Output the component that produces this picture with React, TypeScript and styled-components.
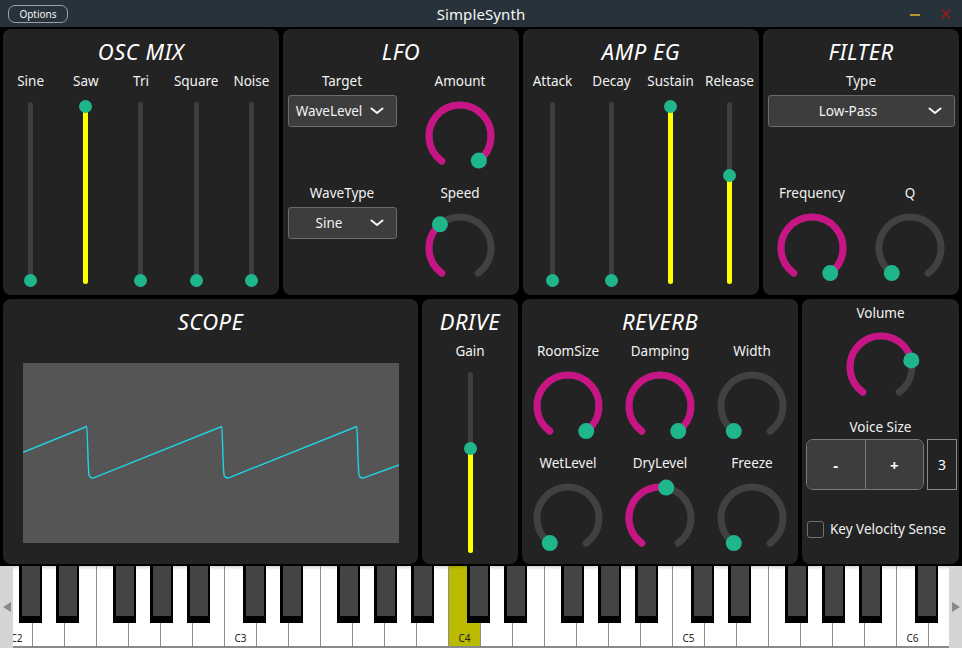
import React from 'react';
import styled, { createGlobalStyle } from 'styled-components';

const GlobalStyle = createGlobalStyle`
  html, body {
    margin: 0;
    padding: 0;
    background: #000;
  }
  body {
    font-family: "Noto Sans", "DejaVu Sans", sans-serif;
    color: #f2f2f2;
  }
`;

const StyledWindow = styled.div`
  width: 962px;
  height: 648px;
  background: #000;
  display: flex;
  flex-direction: column;
  overflow: hidden;
`;

const StyledTitleBar = styled.header`
  height: 27px;
  flex: none;
  background: #27323a;
  display: grid;
  grid-template-columns: 1fr auto 1fr;
  align-items: center;
`;

const StyledOptionsButton = styled.button`
  justify-self: start;
  margin-left: 8px;
  width: 60px;
  height: 18px;
  padding: 0;
  border: 1px solid #9aa1a6;
  border-radius: 7px;
  background: transparent;
  color: #f4f4f4;
  font-family: "Noto Sans", sans-serif;
  font-size: 10px;
  line-height: 16px;
`;

const StyledWindowTitle = styled.div`
  font-size: 15px;
  color: #f6f6f6;
  letter-spacing: 0.1px;
`;

const StyledWindowControls = styled.div`
  justify-self: end;
  display: flex;
  align-items: center;
  gap: 19px;
  padding-right: 10px;
`;

const StyledMain = styled.main`
  padding: 2px 3px 0;
  display: flex;
  flex-direction: column;
  gap: 4px;
`;

const StyledRow = styled.div<{ $h: number }>`
  height: ${(p) => p.$h}px;
  display: flex;
  gap: 4px;
`;

const StyledPanel = styled.section<{ $w?: number; $pt?: number }>`
  ${(p) => (p.$w ? `width: ${p.$w}px; flex: none;` : 'flex: 1;')}
  box-sizing: border-box;
  background: #232323;
  border-radius: 8px;
  padding-top: ${(p) => p.$pt ?? 7}px;
  display: flex;
  flex-direction: column;
`;

const StyledPanelTitle = styled.h2`
  margin: 0;
  height: 30px;
  line-height: 30px;
  text-align: center;
  font-style: italic;
  font-weight: 400;
  font-size: 22px;
  color: #fff;
  letter-spacing: 0.5px;
`;

const StyledColumns = styled.div<{ $n: number }>`
  display: grid;
  grid-template-columns: repeat(${(p) => p.$n}, 1fr);
  grid-auto-rows: 112px;
  margin-top: 6px;
`;

const StyledCell = styled.div<{ $span?: number }>`
  grid-column: span ${(p) => p.$span ?? 1};
  display: flex;
  flex-direction: column;
  align-items: center;
`;

const StyledLabel = styled.div`
  font-size: 13.5px;
  line-height: 19px;
  color: #f2f2f2;
  white-space: nowrap;
`;

const StyledSliderCol = styled.div`
  display: flex;
  flex-direction: column;
  align-items: center;
`;

const StyledTrack = styled.div<{ $h: number }>`
  position: relative;
  width: 5px;
  height: ${(p) => p.$h}px;
  margin-top: 11px;
  background: #3e3e3e;
  border-radius: 3px;
`;

const StyledFill = styled.div`
  position: absolute;
  left: 0;
  right: 0;
  bottom: 0;
  background: #ffff00;
  border-radius: 3px;
`;

const StyledThumb = styled.div`
  position: absolute;
  left: 50%;
  width: 13px;
  height: 13px;
  margin: -6.5px 0 0 -6.5px;
  border-radius: 50%;
  background: #20b68c;
`;

const StyledKnobSvg = styled.svg<{ $mt?: number }>`
  display: block;
  margin-top: ${(p) => p.$mt ?? 7}px;
  overflow: visible;
`;

const StyledCombo = styled.div<{ $w: number }>`
  width: ${(p) => p.$w}px;
  height: 32px;
  box-sizing: border-box;
  margin-top: 4px;
  background: #3d3d3d;
  border: 1px solid #6c6c6c;
  border-radius: 3px;
  display: flex;
  align-items: center;
`;

const StyledComboText = styled.span`
  flex: 1;
  text-align: center;
  font-size: 13.5px;
  color: #f2f2f2;
  white-space: nowrap;
`;

const StyledChevron = styled.svg`
  flex: none;
  margin-right: 12px;
`;

const StyledScopeScreen = styled.div`
  margin: 27px 19px 0 20px;
  height: 180px;
  background: #555555;
`;

const StyledVolumeBody = styled.div`
  display: flex;
  flex-direction: column;
  align-items: center;
`;

const StyledVoiceLabel = styled(StyledLabel)`
  margin-top: 13px;
`;

const StyledVoiceRow = styled.div`
  align-self: stretch;
  margin: 2px 2px 0 4px;
  display: flex;
  gap: 3px;
`;

const StyledStepGroup = styled.div`
  flex: 1;
  height: 51px;
  box-sizing: border-box;
  display: flex;
  border: 1px solid #7a7a7a;
  border-radius: 7px;
  overflow: hidden;
`;

const StyledStepButton = styled.button`
  flex: 1;
  border: none;
  background: #3d3d3d;
  color: #fff;
  font-family: "Noto Sans", sans-serif;
  font-size: 15px;
  font-weight: 700;
  padding: 0;
  & + & {
    border-left: 1px solid #7a7a7a;
  }
`;

const StyledNumberBox = styled.div`
  width: 30px;
  height: 51px;
  box-sizing: border-box;
  border: 1px solid #8a8a8a;
  display: flex;
  align-items: center;
  justify-content: center;
  font-size: 14px;
  color: #fff;
`;

const StyledCheckRow = styled.label`
  align-self: stretch;
  margin-top: 30px;
  padding-left: 5px;
  display: flex;
  align-items: center;
  gap: 6px;
  font-size: 13.5px;
  color: #f2f2f2;
`;

const StyledCheckBox = styled.span`
  width: 17px;
  height: 17px;
  box-sizing: border-box;
  border: 1px solid #707070;
  border-radius: 3px;
`;

const StyledKeyboard = styled.div`
  position: relative;
  margin-top: 2px;
  height: 82px;
  flex: none;
  background: #fff;
  overflow: hidden;
`;

const StyledWhiteRow = styled.div`
  display: flex;
  padding-left: 1px;
  height: 80px;
  border-bottom: 2px solid #8a8a8a;
`;

const StyledWhiteKey = styled.div<{ $active?: boolean }>`
  flex: none;
  width: 32px;
  box-sizing: border-box;
  border-right: 1px solid #8e8e8e;
  background: ${(p) =>
    p.$active
      ? 'linear-gradient(#a5a500, #baba00 4px)'
      : 'linear-gradient(#d8d8d8, #ffffff 4px)'};
  display: flex;
  align-items: flex-end;
  justify-content: center;
  padding-bottom: 2px;
  font-size: 10px;
  line-height: 12px;
  color: #222;
`;

const StyledBlackKey = styled.div`
  position: absolute;
  top: 0;
  width: 23px;
  height: 57px;
  box-sizing: border-box;
  background: #444444;
  border-left: 3px solid #000;
  border-right: 2px solid #000;
  border-bottom: 7px solid #000;
`;

const StyledScrollButton = styled.div<{ $side: 'left' | 'right' }>`
  position: absolute;
  top: 0;
  bottom: 0;
  ${(p) => p.$side}: 0;
  width: 13px;
  background: #d5d5d5;
  display: flex;
  align-items: center;
  justify-content: center;
`;

/* ---------- controls ---------- */

function Slider({ value, height = 182 }: { value: number; height?: number }) {
  const top = 4 + (1 - value) * (height - 8);
  return (
    <StyledTrack $h={height}>
      {value > 0.01 && <StyledFill style={{ height: height - top }} />}
      <StyledThumb style={{ top }} />
    </StyledTrack>
  );
}

const START = -144;
const SPAN = 288;

function point(cx: number, cy: number, r: number, deg: number) {
  const a = (deg * Math.PI) / 180;
  return [cx + r * Math.sin(a), cy - r * Math.cos(a)];
}

function arc(cx: number, cy: number, r: number, a0: number, a1: number) {
  const [x0, y0] = point(cx, cy, r, a0);
  const [x1, y1] = point(cx, cy, r, a1);
  const large = a1 - a0 > 180 ? 1 : 0;
  return `M${x0.toFixed(2)} ${y0.toFixed(2)} A${r} ${r} 0 ${large} 1 ${x1.toFixed(2)} ${y1.toFixed(2)}`;
}

function Knob({ value, mt }: { value: number; mt?: number }) {
  const c = 38;
  const r = 31;
  const a = START + value * SPAN;
  const [tx, ty] = point(c, c, r, a);
  return (
    <StyledKnobSvg $mt={mt} width="76" height="76" viewBox="0 0 76 76">
      <path d={arc(c, c, r, START, START + SPAN)} fill="none" stroke="#414141" strokeWidth="7" strokeLinecap="round" />
      {value > 0.01 && (
        <path d={arc(c, c, r, START, a)} fill="none" stroke="#c71585" strokeWidth="7" strokeLinecap="round" />
      )}
      <circle cx={tx} cy={ty} r="8" fill="#20b68c" />
    </StyledKnobSvg>
  );
}

function Combo({ text, width }: { text: string; width: number }) {
  return (
    <StyledCombo $w={width}>
      <StyledComboText>{text}</StyledComboText>
      <StyledChevron width="14" height="8" viewBox="0 0 14 8">
        <path d="M1.5 1.5 L7 6 L12.5 1.5" fill="none" stroke="#f2f2f2" strokeWidth="2" strokeLinecap="round" strokeLinejoin="round" />
      </StyledChevron>
    </StyledCombo>
  );
}

function KnobCell({ label, value }: { label: string; value: number }) {
  return (
    <StyledCell>
      <StyledLabel>{label}</StyledLabel>
      <Knob value={value} />
    </StyledCell>
  );
}

function sawPath() {
  const peaks = [63.7, 198.7, 333.7];
  let d = 'M0 89.3 L63.7 63.5';
  peaks.forEach((p, i) => {
    const next = peaks[i + 1];
    d += ` C${p + 0.8} 63.5 ${p + 1.1} 107 ${p + 2.4} 112.2 Q${p + 3.8} 115.6 ${p + 7} 114.8`;
    d += next ? ` L${next} 63.5` : ' L376 102';
  });
  return d;
}

/* ---------- panels ---------- */

function OscMix() {
  const sliders: [string, number][] = [
    ['Sine', 0],
    ['Saw', 1],
    ['Tri', 0],
    ['Square', 0],
    ['Noise', 0],
  ];
  return (
    <StyledPanel $w={276}>
      <StyledPanelTitle>OSC MIX</StyledPanelTitle>
      <StyledColumns $n={5} style={{ gridAutoRows: 'auto' }}>
        {sliders.map(([name, v]) => (
          <StyledSliderCol key={name}>
            <StyledLabel>{name}</StyledLabel>
            <Slider value={v} />
          </StyledSliderCol>
        ))}
      </StyledColumns>
    </StyledPanel>
  );
}

function Lfo() {
  return (
    <StyledPanel $w={236}>
      <StyledPanelTitle>LFO</StyledPanelTitle>
      <StyledColumns $n={2}>
        <StyledCell>
          <StyledLabel>Target</StyledLabel>
          <Combo text="WaveLevel" width={109} />
        </StyledCell>
        <KnobCell label="Amount" value={0.995} />
        <StyledCell>
          <StyledLabel>WaveType</StyledLabel>
          <Combo text="Sine" width={109} />
        </StyledCell>
        <KnobCell label="Speed" value={0.36} />
      </StyledColumns>
    </StyledPanel>
  );
}

function AmpEg() {
  const sliders: [string, number][] = [
    ['Attack', 0],
    ['Decay', 0],
    ['Sustain', 1],
    ['Release', 0.6],
  ];
  return (
    <StyledPanel $w={236}>
      <StyledPanelTitle>AMP EG</StyledPanelTitle>
      <StyledColumns $n={4} style={{ gridAutoRows: 'auto' }}>
        {sliders.map(([name, v]) => (
          <StyledSliderCol key={name}>
            <StyledLabel>{name}</StyledLabel>
            <Slider value={v} />
          </StyledSliderCol>
        ))}
      </StyledColumns>
    </StyledPanel>
  );
}

function Filter() {
  return (
    <StyledPanel>
      <StyledPanelTitle>FILTER</StyledPanelTitle>
      <StyledColumns $n={2}>
        <StyledCell $span={2}>
          <StyledLabel>Type</StyledLabel>
          <Combo text="Low-Pass" width={187} />
        </StyledCell>
        <KnobCell label="Frequency" value={1} />
        <KnobCell label="Q" value={0} />
      </StyledColumns>
    </StyledPanel>
  );
}

function Scope() {
  return (
    <StyledPanel $w={415}>
      <StyledPanelTitle>SCOPE</StyledPanelTitle>
      <StyledScopeScreen>
        <svg width="376" height="180" viewBox="0 0 376 180">
          <path d={sawPath()} fill="none" stroke="#1fd4e2" strokeWidth="1.4" />
        </svg>
      </StyledScopeScreen>
    </StyledPanel>
  );
}

function Drive() {
  return (
    <StyledPanel $w={96}>
      <StyledPanelTitle>DRIVE</StyledPanelTitle>
      <StyledColumns $n={1} style={{ gridAutoRows: 'auto' }}>
        <StyledSliderCol>
          <StyledLabel>Gain</StyledLabel>
          <Slider value={0.58} height={181} />
        </StyledSliderCol>
      </StyledColumns>
    </StyledPanel>
  );
}

function Reverb() {
  return (
    <StyledPanel $w={276}>
      <StyledPanelTitle>REVERB</StyledPanelTitle>
      <StyledColumns $n={3}>
        <KnobCell label="RoomSize" value={1} />
        <KnobCell label="Damping" value={1} />
        <KnobCell label="Width" value={0} />
        <KnobCell label="WetLevel" value={0} />
        <KnobCell label="DryLevel" value={0.54} />
        <KnobCell label="Freeze" value={0} />
      </StyledColumns>
    </StyledPanel>
  );
}

function Master() {
  return (
    <StyledPanel $pt={5}>
      <StyledVolumeBody>
        <StyledLabel>Volume</StyledLabel>
        <Knob value={0.77} mt={6} />
        <StyledVoiceLabel>Voice Size</StyledVoiceLabel>
        <StyledVoiceRow>
          <StyledStepGroup>
            <StyledStepButton>-</StyledStepButton>
            <StyledStepButton>+</StyledStepButton>
          </StyledStepGroup>
          <StyledNumberBox>3</StyledNumberBox>
        </StyledVoiceRow>
        <StyledCheckRow>
          <StyledCheckBox />
          Key Velocity Sense
        </StyledCheckRow>
      </StyledVolumeBody>
    </StyledPanel>
  );
}

function Keyboard() {
  const whites = Array.from({ length: 30 }, (_, i) => ({
    i,
    label: i % 7 === 0 ? `C${2 + i / 7}` : '',
  }));
  const blackOffsets = [18, 55, 112, 149, 186];
  const blacks: number[] = [];
  for (let o = 0; o < 5; o++) {
    blackOffsets.forEach((off) => {
      const left = 1 + o * 224 + off;
      if (left < 962) blacks.push(left);
    });
  }
  return (
    <StyledKeyboard>
      <StyledWhiteRow>
        {whites.map((k) => (
          <StyledWhiteKey key={k.i} $active={k.i === 14}>
            {k.label}
          </StyledWhiteKey>
        ))}
      </StyledWhiteRow>
      {blacks.map((left) => (
        <StyledBlackKey key={left} style={{ left }} />
      ))}
      <StyledScrollButton $side="left">
        <svg width="8" height="10" viewBox="0 0 8 10">
          <path d="M0 5 L8 0 L8 10 Z" fill="#8a8a8a" />
        </svg>
      </StyledScrollButton>
      <StyledScrollButton $side="right">
        <svg width="8" height="10" viewBox="0 0 8 10">
          <path d="M8 5 L0 0 L0 10 Z" fill="#8a8a8a" />
        </svg>
      </StyledScrollButton>
    </StyledKeyboard>
  );
}

export default function App() {
  return (
    <>
      <GlobalStyle />
      <StyledWindow>
        <StyledTitleBar>
          <StyledOptionsButton>Options</StyledOptionsButton>
          <StyledWindowTitle>SimpleSynth</StyledWindowTitle>
          <StyledWindowControls>
            <svg width="12" height="12" viewBox="0 0 12 12">
              <rect x="1" y="6" width="10" height="2" fill="#b3962b" />
            </svg>
            <svg width="12" height="12" viewBox="0 0 12 12">
              <path d="M2 1.5 L10 10.5 M10 1.5 L2 10.5" stroke="#a3171a" strokeWidth="1.4" />
            </svg>
          </StyledWindowControls>
        </StyledTitleBar>
        <StyledMain>
          <StyledRow $h={266}>
            <OscMix />
            <Lfo />
            <AmpEg />
            <Filter />
          </StyledRow>
          <StyledRow $h={265}>
            <Scope />
            <Drive />
            <Reverb />
            <Master />
          </StyledRow>
        </StyledMain>
        <Keyboard />
      </StyledWindow>
    </>
  );
}
